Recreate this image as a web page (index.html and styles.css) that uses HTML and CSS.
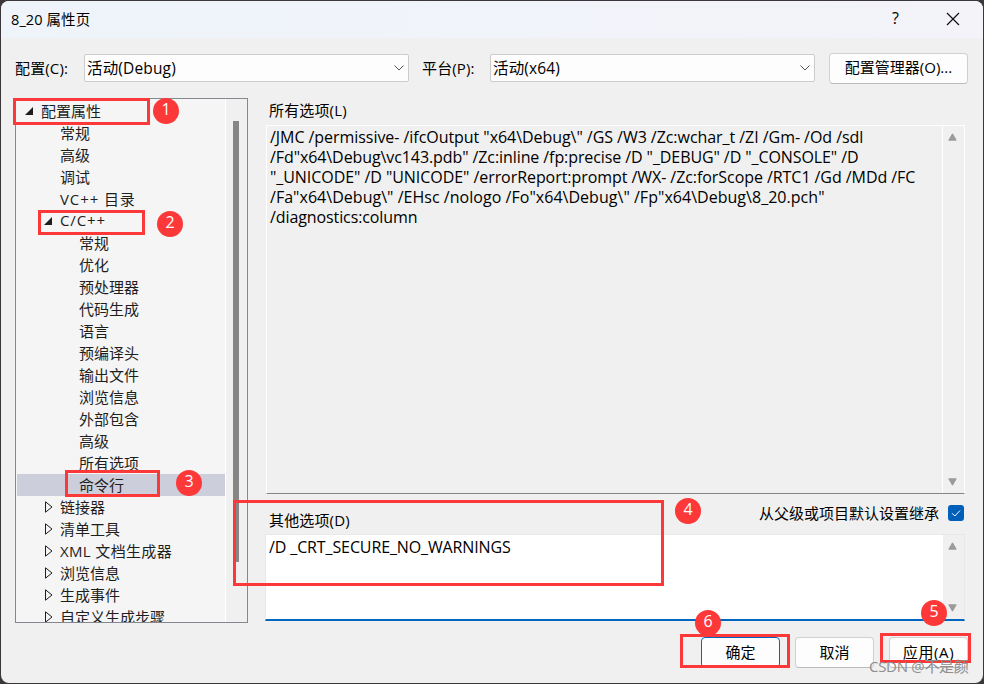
FILE: index.html
```
<!DOCTYPE html>
<html lang="zh-CN">
<head>
    <meta charset="UTF-8">
    <meta name="viewport" content="width=device-width, initial-scale=1.0">
    <title>8_20 属性页</title>
    <link rel="stylesheet" href="styles.css">
</head>
<body>
    <div class="dialog">
        <div class="titlebar">
            <span class="title">8_20 属性页</span>
            <span class="help">?</span>
            <svg class="close" width="14" height="14" viewBox="0 0 14 14"><path d="M1 1L13 13M13 1L1 13" stroke="#111" stroke-width="1.2" fill="none"/></svg>
        </div>

        <div class="toolbar">
            <label class="label-config">配置(C):</label>
            <div class="select">
                <span>活动(Debug)</span>
                <svg width="10" height="6" viewBox="0 0 10 6"><path d="M.5 .5L5 5L9.5 .5" stroke="#555" fill="none"/></svg>
            </div>
            <label class="label-platform">平台(P):</label>
            <div class="select">
                <span>活动(x64)</span>
                <svg width="10" height="6" viewBox="0 0 10 6"><path d="M.5 .5L5 5L9.5 .5" stroke="#555" fill="none"/></svg>
            </div>
            <button type="button" class="btn btn-manager">配置管理器(O)...</button>
        </div>

        <div class="main">
            <div class="tree">
                <ul class="tree-list">
                    <li class="root"><i class="arrow open"></i>配置属性</li>
                    <li class="level1">常规</li>
                    <li class="level1">高级</li>
                    <li class="level1">调试</li>
                    <li class="level1 latin">VC++ 目录</li>
                    <li class="level1 latin"><i class="arrow open"></i>C/C++</li>
                    <li class="level2">常规</li>
                    <li class="level2">优化</li>
                    <li class="level2">预处理器</li>
                    <li class="level2">代码生成</li>
                    <li class="level2">语言</li>
                    <li class="level2">预编译头</li>
                    <li class="level2">输出文件</li>
                    <li class="level2">浏览信息</li>
                    <li class="level2">外部包含</li>
                    <li class="level2">高级</li>
                    <li class="level2">所有选项</li>
                    <li class="level2 selected">命令行</li>
                    <li class="level1"><svg class="arrow" width="8" height="12" viewBox="0 0 8 12"><path d="M.5 .8L7 6L.5 11.2Z"/></svg>链接器</li>
                    <li class="level1"><svg class="arrow" width="8" height="12" viewBox="0 0 8 12"><path d="M.5 .8L7 6L.5 11.2Z"/></svg>清单工具</li>
                    <li class="level1 xml"><svg class="arrow" width="8" height="12" viewBox="0 0 8 12"><path d="M.5 .8L7 6L.5 11.2Z"/></svg>XML 文档生成器</li>
                    <li class="level1"><svg class="arrow" width="8" height="12" viewBox="0 0 8 12"><path d="M.5 .8L7 6L.5 11.2Z"/></svg>浏览信息</li>
                    <li class="level1"><svg class="arrow" width="8" height="12" viewBox="0 0 8 12"><path d="M.5 .8L7 6L.5 11.2Z"/></svg>生成事件</li>
                    <li class="level1"><svg class="arrow" width="8" height="12" viewBox="0 0 8 12"><path d="M.5 .8L7 6L.5 11.2Z"/></svg>自定义生成步骤</li>
                </ul>
                <div class="tree-scroll"><div class="thumb"></div></div>
            </div>

            <div class="options">
                <label class="label-all">所有选项(L)</label>
                <div class="textbox readonly">
                    <div class="text">
                        <div class="line line1">/JMC /permissive- /ifcOutput "x64\Debug\" /GS /W3 /Zc:wchar_t /ZI /Gm- /Od /sdl</div>
                        <div class="line line2">/Fd"x64\Debug\vc143.pdb" /Zc:inline /fp:precise /D "_DEBUG" /D "_CONSOLE" /D</div>
                        <div class="line line3">"_UNICODE" /D "UNICODE" /errorReport:prompt /WX- /Zc:forScope /RTC1 /Gd /MDd /FC</div>
                        <div class="line line4">/Fa"x64\Debug\" /EHsc /nologo /Fo"x64\Debug\" /Fp"x64\Debug\8_20.pch"</div>
                        <div class="line line5">/diagnostics:column</div>
                    </div>
                    <div class="scroll">
                        <svg width="10" height="8" viewBox="0 0 10 8"><path d="M5.5 .8L9.2 7.2H1.8Z"/></svg>
                        <svg width="10" height="8" viewBox="0 0 10 8"><path d="M5.5 7.2L9.2 .8H1.8Z"/></svg>
                    </div>
                </div>
                <div class="other-row">
                    <label class="label-other">其他选项(D)</label>
                    <span class="inherit">从父级或项目默认设置继承</span>
                    <svg class="checkbox" width="16" height="16" viewBox="0 0 16 16"><rect width="16" height="16" rx="3" fill="#005fb8"/><path d="M4 8.2L6.8 11L12 5.6" stroke="#fff" fill="none"/></svg>
                </div>
                <div class="textbox editable">
                    <div class="text">
                        <div class="line line6">/D _CRT_SECURE_NO_WARNINGS</div>
                    </div>
                    <div class="scroll">
                        <svg width="10" height="8" viewBox="0 0 10 8"><path d="M5.5 .8L9.2 7.2H1.8Z"/></svg>
                        <svg width="10" height="8" viewBox="0 0 10 8"><path d="M5.5 7.2L9.2 .8H1.8Z"/></svg>
                    </div>
                </div>
            </div>
        </div>

        <div class="footer">
            <button type="button" class="btn btn-primary">确定</button>
            <button type="button" class="btn">取消</button>
            <button type="button" class="btn btn-apply">应用(A)</button>
        </div>
    </div>

    <!-- step marks over the dialog -->
    <div class="mark mark1"></div>
    <div class="mark mark2"></div>
    <div class="mark mark3"></div>
    <div class="mark mark4"></div>
    <div class="mark mark5"></div>
    <div class="mark mark6"></div>
    <div class="step step1">1</div>
    <div class="step step2">2</div>
    <div class="step step3">3</div>
    <div class="step step4">4</div>
    <div class="step step5">5</div>
    <div class="step step6">6</div>
    <div class="watermark">CSDN @不是颜</div>
</body>
</html>
```
FILE: styles.css
```
* {
    box-sizing: border-box;
}

body {
    margin: 0;
    padding: 1px;
    width: 984px;
    height: 684px;
    overflow: hidden;
    position: relative;
    background-color: #3b373a;
    color: #000;
    font-size: 15px;
    font-family: "Open Sans", "Noto Sans CJK SC", sans-serif;
}

.dialog {
    width: 982px;
    height: 682px;
    border-radius: 8px;
    overflow: hidden;
    background-color: #f0f0f0;
}

.titlebar {
    height: 37px;
    padding: 0 23px 2px 10px;
    display: flex;
    align-items: center;
    background: linear-gradient(90deg, #eef4fa, #f3f3f9);
}

.title {
    flex: 1;
    padding-bottom: 1px;
    font-size: 14.5px;
    letter-spacing: 0.1px;
}

.help {
    width: 54px;
    padding-bottom: 2px;
    font-size: 16px;
}

.toolbar {
    display: flex;
    align-items: center;
    height: 60px;
    padding-left: 14px;
    letter-spacing: 0.15px;
}

.label-config {
    width: 69px;
    padding-bottom: 2px;
}

.label-platform {
    width: 81px;
    padding: 0 0 2px 13px;
}

.select {
    width: 325px;
    height: 28px;
    padding: 0 4px 1px 2px;
    display: flex;
    align-items: center;
    justify-content: space-between;
    border: 1px solid #ccc;
    border-radius: 2px;
    background-color: #fdfdfd;
    font-size: 15.5px;
}

.btn {
    width: 79px;
    height: 31px;
    padding: 0 0 2px;
    border: 1px solid #d0d0d0;
    border-bottom-color: #bbb;
    border-radius: 4px;
    color: #000;
    background-color: #fdfdfd;
    font: inherit;
}

.btn-manager {
    width: 139px;
    margin-left: 14px;
    padding-bottom: 3px;
}

.btn-primary {
    border-color: #0067c0;
}

.btn-apply {
    letter-spacing: 0.6px;
}

.main {
    display: flex;
    height: 525px;
}

.tree {
    width: 233px;
    height: 525px;
    margin-left: 14px;
    padding: 1px 0 1px 1px;
    display: flex;
    overflow: hidden;
    border: 1px solid #828790;
    background-color: #f5f5f5;
}

.tree-list {
    flex: 1;
    margin: 0;
    padding: 0;
    list-style: none;
    color: #1e1e1e;
}

.tree-list li {
    display: flex;
    align-items: center;
    height: 22px;
    padding-bottom: 2px;
    white-space: nowrap;
}

.tree-list .root {
    padding-left: 8px;
}

.tree-list .level1 {
    padding-left: 43px;
}

.tree-list .level2 {
    padding-left: 62px;
}

.tree-list .selected {
    background-color: #cccedb;
}

.tree-list .latin {
    letter-spacing: 0.9px;
}

.tree-list .xml {
    letter-spacing: 0.35px;
}

.arrow.open {
    width: 8px;
    height: 8px;
    margin: 2px 8px 0 0;
    background-color: #1e1e1e;
    clip-path: polygon(100% 0, 100% 100%, 0 100%);
}

.tree-list .level1 .open {
    margin-left: -16px;
}

svg.arrow {
    margin: 2px 7px 0 -15px;
    fill: none;
    stroke: #1e1e1e;
}

.tree-scroll {
    width: 22px;
    margin: -1px 0;
    padding: 22px 0 0 7px;
    border-left: 1px solid #fff;
    background-color: #f0f0f0;
}

.thumb {
    width: 6px;
    height: 441px;
    background-color: #868686;
}

.options {
    width: 700px;
    margin-left: 17px;
}

.label-all,
.label-other {
    padding-left: 4px;
    letter-spacing: 0.15px;
}

.label-all {
    display: block;
    height: 27px;
    line-height: 24px;
}

.textbox {
    display: flex;
    justify-content: space-between;
}

.text {
    padding: 1px 0 0 3px;
}

.line {
    height: 20px;
    font-size: 16px;
    line-height: 20px;
    white-space: nowrap;
}

.line1 { letter-spacing: -0.05px; }
.line2 { letter-spacing: -0.09px; }
.line3 { letter-spacing: -0.06px; }
.line4 { letter-spacing: 0.03px; }
.line5 { letter-spacing: -0.1px; }
.line6 { letter-spacing: -0.12px; }

.readonly {
    height: 369px;
    margin-left: 1px;
    border: 1px solid #fff;
    border-bottom-color: #868686;
}

.scroll {
    width: 22px;
    padding: 7px 0 7px 4px;
    display: flex;
    flex-direction: column;
    justify-content: space-between;
    border-left: 1px solid #fff;
    background-color: #f0f0f0;
}

.scroll svg {
    fill: #9b9b9b;
    stroke: #9b9b9b;
    stroke-linejoin: round;
}

.other-row {
    height: 40px;
    padding: 0 1px 2px 0;
    display: flex;
    align-items: center;
}

.label-other {
    flex: 1;
    padding-top: 13px;
}

.inherit {
    padding-bottom: 1px;
}

.checkbox {
    margin-left: 9px;
}

.editable {
    height: 87px;
    border: 1px solid #e8e8e8;
    border-bottom: 2px solid #0067c0;
    background-color: #fff;
}

.editable .text {
    padding-top: 2px;
}

.footer {
    display: flex;
    gap: 15px;
    padding: 14px 0 0 700px;
}

.mark {
    position: absolute;
    border: 3px solid #fd3838;
}

.mark1 { left: 13px; top: 98px; width: 137px; height: 27px; }
.mark2 { left: 38px; top: 210px; width: 107px; height: 25px; }
.mark3 { left: 65px; top: 470px; width: 95px; height: 27px; }
.mark4 { left: 233px; top: 500px; width: 431px; height: 86px; }
.mark5 { left: 880px; top: 633px; width: 91px; height: 30px; }
.mark6 { left: 680px; top: 634px; width: 110px; height: 34px; }

.step {
    position: absolute;
    width: 26px;
    height: 26px;
    border-radius: 50%;
    background-color: #fd3838;
    color: #fff;
    font-size: 16px;
    line-height: 23px;
    text-align: center;
}

.step1 { left: 153px; top: 98px; }
.step2 { left: 157px; top: 211px; }
.step3 { left: 176px; top: 470px; }
.step4 { left: 675px; top: 498px; }
.step5 { left: 921px; top: 600px; }
.step6 { left: 695px; top: 610px; }

.watermark {
    position: absolute;
    left: 869px;
    top: 656px;
    color: #8e8e8e;
    font-size: 15px;
    line-height: 20px;
    letter-spacing: -0.3px;
    white-space: nowrap;
}
```
